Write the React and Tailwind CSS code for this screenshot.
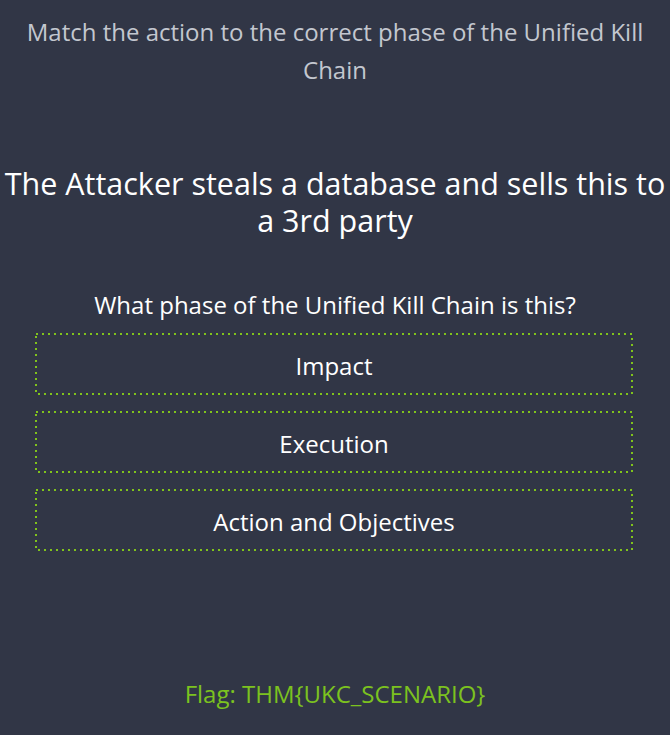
export default function App() {
  const options = ['Impact', 'Execution', 'Action and Objectives'];

  return (
    <div className="min-h-[735px] bg-[#313646] font-['Open_Sans',sans-serif] text-center pt-[13px]">
      <p className="px-4 text-[24px] leading-[38px] text-[#c3c7cf]">
        Match the action to the correct phase of the Unified Kill Chain
      </p>
      <h1 className="mt-[76px] px-1 text-[30.5px] leading-[37px] text-white">
        The Attacker steals a database and sells this to a 3rd party
      </h1>
      <p className="mt-[50px] text-[24px] leading-[32px] text-white">
        What phase of the Unified Kill Chain is this?
      </p>
      <div className="mt-[12px] ml-[35px] mr-[37px] flex flex-col gap-4">
        {options.map(option => (
          <button
            key={option}
            className="relative h-[62px] pt-[3px] text-[24px] text-white"
          >
            <svg className="absolute inset-0 h-full w-full" aria-hidden="true">
              <rect
                x="1"
                y="1"
                className="[width:calc(100%-2px)] [height:calc(100%-2px)]"
                fill="none"
                stroke="#80c41c"
                strokeWidth="2"
                strokeDasharray="2 4"
              />
            </svg>
            {option}
          </button>
        ))}
      </div>
      <p className="mt-[127px] text-[24px] leading-[32px] text-[#7cc21f]">
        Flag: THM{'{'}UKC_SCENARIO{'}'}
      </p>
    </div>
  );
}
